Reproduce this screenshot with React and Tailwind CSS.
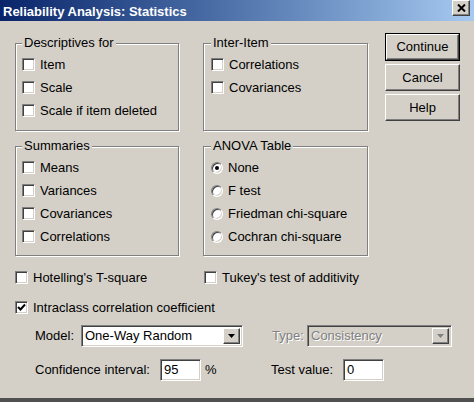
import { useState } from "react";

const sunken =
  "border border-t-[#808080] border-l-[#808080] border-r-white border-b-white shadow-[inset_1px_1px_0_#404040,inset_-1px_-1px_0_#d4d0c8]";
const raised =
  "border border-t-white border-l-white border-r-[#404040] border-b-[#404040] shadow-[inset_-1px_-1px_0_#808080,inset_1px_1px_0_#d4d0c8]";

function CheckBox({ label, checked }) {
  const [on, setOn] = useState(!!checked);
  return (
    <label className="flex h-[23px] items-center gap-[5px] whitespace-nowrap">
      <span
        onClick={() => setOn(!on)}
        className={`flex size-[13px] shrink-0 items-center justify-center bg-white ${sunken}`}
      >
        {on && (
          <svg width="9" height="9" viewBox="0 0 9 9">
            <path d="M1 4 L3.5 6.5 L8 1.5" fill="none" stroke="#000" strokeWidth="2" />
          </svg>
        )}
      </span>
      <span>{label}</span>
    </label>
  );
}

function Radio({ label, checked, onPick }) {
  return (
    <label
      onClick={onPick}
      className="flex h-[23px] items-center gap-[5px] whitespace-nowrap"
    >
      <span className="flex size-[12px] shrink-0 items-center justify-center rounded-full border border-t-[#808080] border-l-[#808080] border-r-white border-b-white bg-white shadow-[inset_1px_1px_0_#404040,inset_-1px_-1px_0_#d4d0c8]">
        {checked && <span className="size-[4px] rounded-full bg-black" />}
      </span>
      <span>{label}</span>
    </label>
  );
}

function Group({ title, children, className }) {
  return (
    <fieldset
      className={`border border-[#808080] pl-[6px] shadow-[inset_1px_1px_0_#fff,1px_1px_0_#fff] ${className}`}
    >
      <legend className="bg-[#d4d0c8] px-[2px] leading-[16px]">{title}</legend>
      <div className="flex flex-col pt-[2px]">{children}</div>
    </fieldset>
  );
}

function Arrow({ disabled }) {
  return (
    <span
      className={`flex h-full w-[17px] shrink-0 items-center justify-center bg-[#d4d0c8] ${raised}`}
    >
      <svg width="7" height="4" viewBox="0 0 7 4">
        <path d="M0 0 H7 L3.5 4 Z" fill={disabled ? "#808080" : "#000"} />
      </svg>
    </span>
  );
}

function Button({ children, isDefault }) {
  return (
    <button
      className={
        isDefault
          ? "h-[28px] w-[75px] border border-black"
          : "h-[27px] w-[75px]"
      }
    >
      <span className={`flex h-full w-full items-center justify-center bg-[#d4d0c8] ${raised}`}>
        {children}
      </span>
    </button>
  );
}

export default function App() {
  const [anova, setAnova] = useState("None");

  return (
    <div className="flex h-[402px] w-[474px] flex-col border-b-4 border-[#505050] bg-[#d4d0c8] font-['Liberation_Sans',Arial,sans-serif] text-[13px] text-black">
      {/* Title bar */}
      <div className="flex h-[21px] shrink-0 overflow-hidden bg-linear-to-r from-[#0a246a] to-[#a6caf0]">
        <span className="pl-[3px] font-bold leading-[23px] text-white">
          Reliability Analysis: Statistics
        </span>
        <span
          className={`ml-auto mr-[4px] flex h-[16px] w-[18px] items-center justify-center bg-[#d4d0c8] ${raised}`}
        >
          <svg width="9" height="8" viewBox="0 0 9 8">
            <path d="M1 0.5 L8 7.5 M8 0.5 L1 7.5" stroke="#000" strokeWidth="2" />
          </svg>
        </span>
      </div>

      <div className="flex pl-[15px]">
        <div className="grid grid-cols-[164px_165px] gap-x-[24px] gap-y-[7px] pt-[14px]">
          <Group title="Descriptives for" className="h-[96px]">
            <CheckBox label="Item" />
            <CheckBox label="Scale" />
            <CheckBox label="Scale if item deleted" />
          </Group>
          <Group title="Inter-Item" className="h-[96px] pl-[7px]">
            <CheckBox label="Correlations" />
            <CheckBox label="Covariances" />
          </Group>
          <Group title="Summaries" className="h-[118px]">
            <CheckBox label="Means" />
            <CheckBox label="Variances" />
            <CheckBox label="Covariances" />
            <CheckBox label="Correlations" />
          </Group>
          <Group title="ANOVA Table" className="h-[118px] pl-[7px]">
            {["None", "F test", "Friedman chi-square", "Cochran chi-square"].map((o) => (
              <Radio key={o} label={o} checked={anova === o} onPick={() => setAnova(o)} />
            ))}
          </Group>
        </div>

        <div className="ml-[17px] flex flex-col gap-[3px] pt-[12px]">
          <Button isDefault>Continue</Button>
          <Button>Cancel</Button>
          <Button>Help</Button>
        </div>
      </div>

      <div className="flex flex-col pl-[15px]">
        <div className="mt-[10px] flex">
          <div className="w-[189px]">
            <CheckBox label="Hotelling's T-square" />
          </div>
          <CheckBox label="Tukey's test of additivity" />
        </div>

        <div className="mt-[7px]">
          <CheckBox label="Intraclass correlation coefficient" checked />
        </div>

        <div className="mt-[6px] flex h-[22px] items-center pl-[20px]">
          <div className="flex w-[237px] items-center">
            <span className="w-[46px]">Model:</span>
            <div className={`flex h-[22px] w-[162px] items-center bg-white ${sunken} p-[2px]`}>
              <span className="flex-1 pl-[1px]">One-Way Random</span>
              <Arrow />
            </div>
          </div>
          <span className="w-[35px] text-[#808080] [text-shadow:1px_1px_0_#fff]">Type:</span>
          <div className={`flex h-[22px] w-[145px] items-center bg-[#d4d0c8] ${sunken} p-[2px]`}>
            <span className="flex-1 pl-[1px] text-[#808080] [text-shadow:1px_1px_0_#fff]">
              Consistency
            </span>
            <Arrow disabled />
          </div>
        </div>

        <div className="mt-[12px] flex h-[22px] items-center pl-[20px]">
          <div className="flex w-[236px] items-center">
            <span className="w-[125px]">Confidence interval:</span>
            <div className={`flex h-[22px] w-[41px] items-center bg-white pl-[3px] ${sunken}`}>
              95
            </div>
            <span className="ml-[4px]">%</span>
          </div>
          <span className="w-[72px]">Test value:</span>
          <div className={`flex h-[22px] w-[41px] items-center bg-white pl-[3px] ${sunken}`}>
            0
          </div>
        </div>
      </div>
    </div>
  );
}
